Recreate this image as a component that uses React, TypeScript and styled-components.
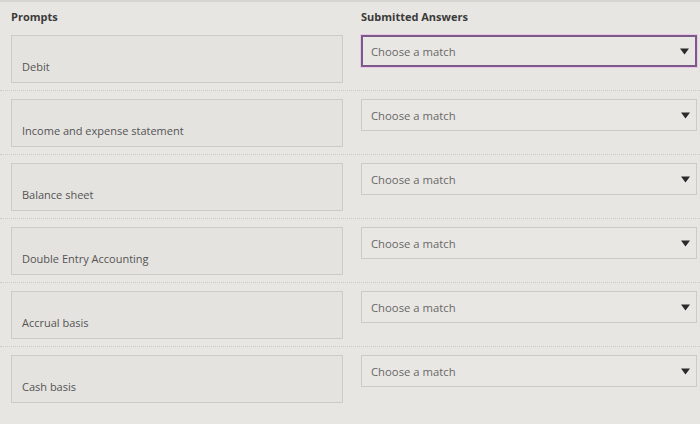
import React from 'react';
import styled, { createGlobalStyle } from 'styled-components';

const GlobalStyle = createGlobalStyle`
  html, body {
    margin: 0;
    padding: 0;
    background: #e7e6e2;
  }
  body {
    font-family: "Open Sans", "Liberation Sans", sans-serif;
  }
`;

const Page = styled.div`
  width: 700px;
  height: 424px;
  box-sizing: border-box;
  border-top: 2px solid #d6d5d1;
  padding: 0 3px 0 11px;
  background: #e7e6e2;
  overflow: hidden;
`;

const HeaderRow = styled.div`
  display: grid;
  grid-template-columns: 332px 1fr;
  column-gap: 18px;
  height: 31px;
  align-items: center;
`;

const ColumnTitle = styled.div`
  font-size: 11px;
  font-weight: 700;
  color: #3b3a3a;
  padding-bottom: 3px;
`;

const MatchRow = styled.div<{ $last?: boolean }>`
  display: grid;
  grid-template-columns: 332px 1fr;
  column-gap: 18px;
  align-items: start;
  padding: 2px 3px 7px 11px;
  margin: 0 -3px 6px -11px;
  border-bottom: ${p => (p.$last ? 'none' : '1px dotted #cbcac6')};
`;

const PromptBox = styled.div`
  height: 48px;
  box-sizing: border-box;
  display: flex;
  align-items: flex-end;
  padding: 0 10px 8px;
  background: #e4e3e0;
  border: 1px solid #cccbc7;
  font-size: 11px;
  color: #555453;
`;

const Select = styled.div<{ $focused?: boolean }>`
  height: 32px;
  box-sizing: border-box;
  display: flex;
  align-items: center;
  justify-content: space-between;
  padding: 0 6px 0 ${p => (p.$focused ? '8px' : '9px')};
  background: #e8e7e4;
  border: ${p => (p.$focused ? '2px solid #7c5a88' : '1px solid #cccbc7')};
  box-shadow: ${p => (p.$focused ? '0 0 0 1px #e8c7ea' : 'none')};
  font-size: 11.3px;
  color: #686766;
`;

const Caret = styled.svg`
  width: 9px;
  height: 7px;
  flex: none;
`;

const prompts = [
  'Debit',
  'Income and expense statement',
  'Balance sheet',
  'Double Entry Accounting',
  'Accrual basis',
  'Cash basis',
];

export default function App() {
  return (
    <>
      <GlobalStyle />
      <Page>
        <HeaderRow>
          <ColumnTitle>Prompts</ColumnTitle>
          <ColumnTitle>Submitted Answers</ColumnTitle>
        </HeaderRow>
        {prompts.map((p, i) => (
          <MatchRow key={p} $last={i === prompts.length - 1}>
            <PromptBox>{p}</PromptBox>
            <Select $focused={i === 0}>
              <span>Choose a match</span>
              <Caret viewBox="0 0 9 7">
                <path d="M0 0.5 H9 L4.5 6.5 Z" fill="#2b2a2a" />
              </Caret>
            </Select>
          </MatchRow>
        ))}
      </Page>
    </>
  );
}
